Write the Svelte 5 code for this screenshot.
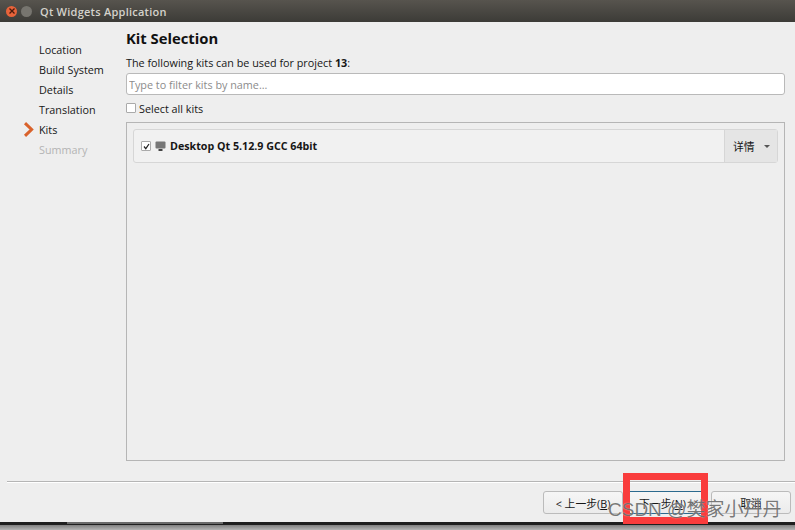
<script>
  let steps = [
    { label: "Location" },
    { label: "Build System" },
    { label: "Details" },
    { label: "Translation" },
    { label: "Kits", current: true },
    { label: "Summary", pending: true }
  ];
</script>

<div class="screen">
  <div class="window">
    <header class="titlebar">
      <span class="win-btn close">
        <svg width="8" height="8" viewBox="0 0 8 8"><path d="M1.5 1.5l5 5M6.5 1.5l-5 5" stroke="#4a1a0c" stroke-width="1.3" /></svg>
      </span>
      <span class="win-btn min"></span>
      <span class="win-title">Qt Widgets Application</span>
    </header>

    <div class="main">
      <nav class="steps">
        {#each steps as step}
          <div class="step" class:pending={step.pending}>
            {#if step.current}
              <svg class="arrow" width="11" height="15" viewBox="0 0 11 15">
                <path d="M2 1.2L8.6 7.5 2 13.8" fill="none" stroke="#d9622b" stroke-width="3" />
              </svg>
            {/if}
            {step.label}
          </div>
        {/each}
      </nav>

      <section class="page">
        <h1>Kit Selection</h1>
        <p class="intro">The following kits can be used for project <b>13</b>:</p>
        <input class="filter" placeholder="Type to filter kits by name..." />
        <label class="select-all"><span class="box"></span>Select all kits</label>

        <div class="kits">
          <div class="kit">
            <span class="box small">
              <svg width="7" height="7" viewBox="0 0 7 7"><path d="M1 3.5l1.8 2.2L6 1" fill="none" stroke="#222" stroke-width="1.2" /></svg>
            </span>
            <svg class="monitor" width="11" height="11" viewBox="0 0 11 11">
              <rect x="0.5" y="0.5" width="10" height="7" rx="1" fill="#777" />
              <rect x="3.5" y="8" width="4" height="2" fill="#444" />
            </svg>
            <span class="kit-name">Desktop Qt 5.12.9 GCC 64bit</span>
            <span class="details">详情<i class="caret"></i></span>
          </div>
        </div>
      </section>
    </div>

    <footer class="footer">
      <button>&lt; 上一步(<u>B</u>)</button>
      <button class="next">下一步(<u>N</u>) &gt;</button>
      <button>取消</button>
    </footer>
  </div>
  <div class="shadow"><span class="strip"></span></div>

  <div class="highlight"></div>
  <div class="watermark">CSDN @樊家小丹丹</div>
</div>

<style>
  :global(body) {
    margin: 0;
    background: #8f8f8f;
  }
  .screen {
    position: relative;
    width: 795px;
    height: 530px;
    overflow: hidden;
    display: flex;
    flex-direction: column;
    font-family: "Open Sans", "Noto Sans", "Noto Sans CJK SC", sans-serif;
    font-size: 10.8px;
    color: #161616;
  }
  .window {
    height: 522px;
    flex: none;
    display: flex;
    flex-direction: column;
    background: #eeeeee;
  }
  .titlebar {
    height: 22px;
    flex: none;
    display: flex;
    align-items: center;
    padding-left: 6px;
    background: linear-gradient(#57544e, #3c3b37);
  }
  .win-btn {
    width: 11px;
    height: 11px;
    border-radius: 50%;
    display: flex;
    align-items: center;
    justify-content: center;
    margin-right: 4px;
  }
  .close {
    background: #e8633a;
  }
  .min {
    background: #77756f;
  }
  .win-title {
    margin-left: 4px;
    color: #d4d2cb;
    font-size: 11px;
    font-weight: 600;
    letter-spacing: 0.25px;
  }
  .main {
    flex: 1;
    min-height: 0;
    display: flex;
  }
  .steps {
    width: 126px;
    flex: none;
    box-sizing: border-box;
    padding: 18px 0 0 39px;
  }
  .step {
    position: relative;
    height: 20px;
    line-height: 20px;
    white-space: nowrap;
  }
  .step.pending {
    color: #b4b4b4;
  }
  .arrow {
    position: absolute;
    left: -16px;
    top: 2px;
  }
  .page {
    flex: 1;
    display: flex;
    flex-direction: column;
    padding: 7px 10px 0 0;
    min-width: 0;
  }
  h1 {
    margin: 0;
    font-size: 14.8px;
    font-weight: 700;
    line-height: 18px;
    color: #111;
  }
  .intro {
    margin: 8px 0 0;
    line-height: 16px;
  }
  .filter {
    margin-top: 2px;
    height: 22px;
    box-sizing: border-box;
    border: 1px solid #b9b9b9;
    border-radius: 3px;
    background: #fff;
    padding: 0 2px;
    font: inherit;
    outline: none;
  }
  .filter::placeholder {
    color: #8c8c8c;
    opacity: 1;
  }
  .select-all {
    margin-top: 5px;
    height: 16px;
    display: flex;
    align-items: center;
    gap: 3px;
  }
  .box {
    width: 8px;
    height: 8px;
    flex: none;
    border: 1px solid #aaa;
    border-radius: 1px;
    background: #fff;
    display: flex;
    align-items: center;
    justify-content: center;
  }
  .kits {
    margin-top: 6px;
    height: 339px;
    box-sizing: border-box;
    border: 1px solid #b5b5b5;
    padding: 6px;
  }
  .kit {
    height: 34px;
    box-sizing: border-box;
    border: 1px solid #d6d6d6;
    border-radius: 3px;
    background: #f1f1f1;
    display: flex;
    align-items: center;
    padding-left: 7px;
  }
  .monitor {
    margin-left: 4px;
  }
  .kit-name {
    margin-left: 4px;
    font-weight: 700;
    font-size: 10.7px;
  }
  .details {
    margin-left: auto;
    width: 53px;
    height: 100%;
    box-sizing: border-box;
    border-left: 1px solid #d6d6d6;
    background: #e5e5e5;
    display: flex;
    align-items: center;
    padding-left: 8px;
  }
  .caret {
    margin-left: 9px;
    margin-top: 1px;
    border: 3px solid transparent;
    border-top: 3px solid #555;
    border-bottom: 0;
  }
  .footer {
    flex: none;
    height: 41px;
    box-sizing: border-box;
    margin-left: 7px;
    border-top: 1px solid #b5b5b5;
    box-shadow: inset 0 1px 0 #fff;
    display: flex;
    justify-content: flex-end;
    align-items: flex-start;
    gap: 4px;
    padding: 9px 4px 0 0;
  }
  button {
    width: 80px;
    height: 23px;
    padding: 0;
    border: 1px solid #bbb;
    border-radius: 3px;
    background: linear-gradient(#f6f6f6, #ebebeb);
    font: inherit;
    color: #161616;
  }
  button.next {
    border-color: #2c6a8e;
  }
  .shadow {
    flex: 1;
    background: linear-gradient(#1f1f1f 3px, #7f7f7f 3px, #b5b5b5);
    padding-left: 67px;
  }
  .strip {
    display: block;
    width: 156px;
    height: 2px;
    background: #6a6a6a;
  }
  .highlight {
    position: absolute;
    left: 623px;
    top: 473px;
    width: 85px;
    height: 51px;
    box-sizing: border-box;
    border: 7px solid #f93c3c;
  }
  .watermark {
    position: absolute;
    left: 608px;
    top: 498px;
    font-family: "Liberation Sans", "Noto Sans CJK SC", sans-serif;
    font-size: 19px;
    line-height: 24px;
    white-space: nowrap;
    color: rgba(70, 70, 70, 0.72);
    text-shadow: 0 0 1px rgba(255, 255, 255, 0.8);
  }
</style>
